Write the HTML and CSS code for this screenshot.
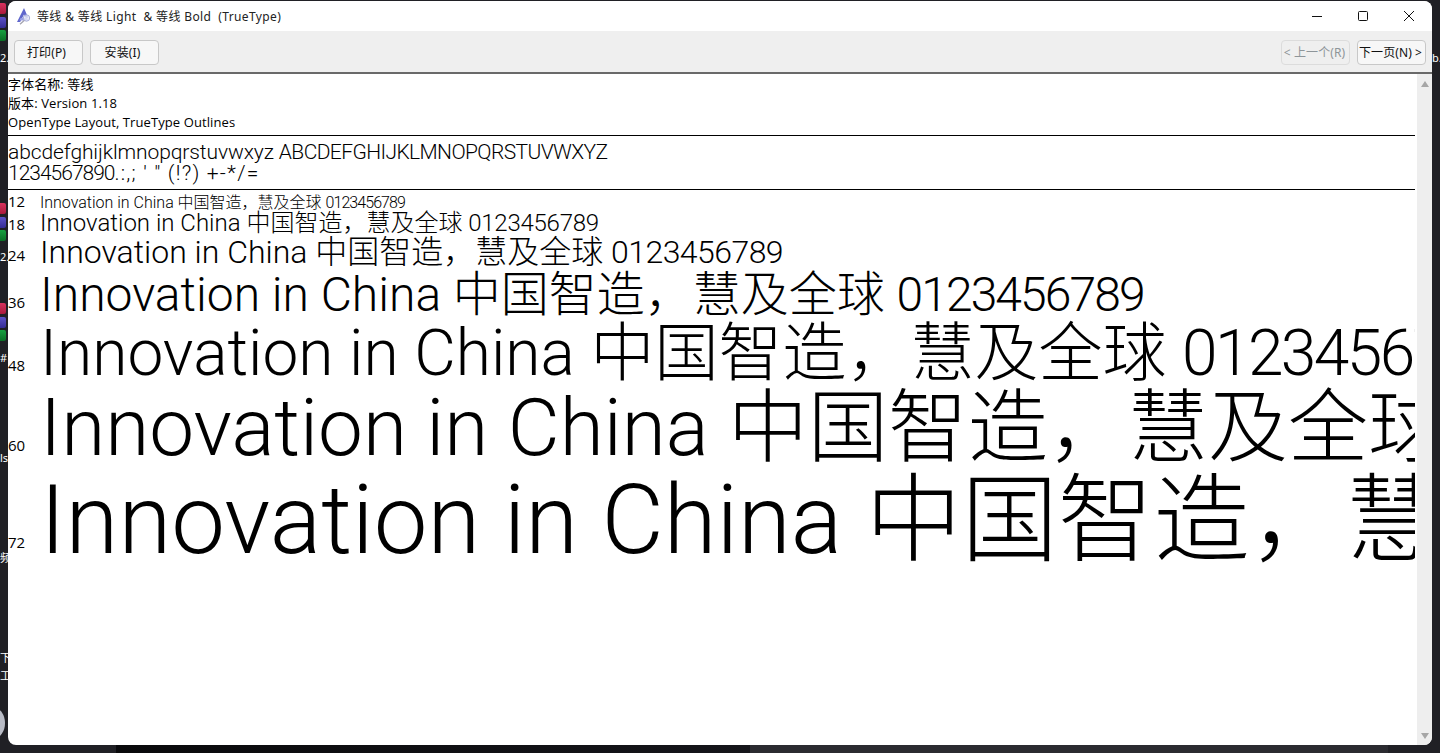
FILE: index.html
```html
<!DOCTYPE html>
<html lang="zh">
<head>
<meta charset="utf-8">
<title>等线</title>
<link rel="stylesheet" href="styles.css">
</head>
<body>
<div class="desk">
  <i class="tile t1"></i><i class="tile t2"></i><i class="tile t3"></i>
  <i class="tile t4"></i><i class="tile t5"></i><i class="tile t6"></i>
  <i class="tile t7"></i><i class="tile t8"></i><i class="tile t9"></i>
  <span class="bit b1">2.</span><span class="bit b2">2.</span><span class="bit b3">#</span><span class="bit b4">ls</span><span class="bit b5">频</span><span class="bit b6">下</span><span class="bit b7">工</span>
  <i class="disc"></i>
</div>
<span class="bit-right">b.</span>
<main class="window">
  <header class="titlebar">
    <svg class="app-icon" viewBox="0 0 18 18" width="18" height="18"><path d="M9 1 2 15h3.2L9 7.5l1.6 3.2h2.6z" fill="#5f66cc"/><path d="M5.6 11h6.4l1.2 2.4H4.4z" fill="#9aa0e6"/><circle cx="11.5" cy="11" r="3.2" fill="#e4e6f6" fill-opacity=".8" stroke="#a9aed8"/><path d="M9.2 13.4 5 17.2" stroke="#a4a4b0" stroke-width="1.3" fill="none"/></svg>
    <span class="title">等线 &amp; 等线 Light &nbsp;&amp; 等线 Bold &nbsp;(TrueType)</span>
    <div class="controls">
      <svg viewBox="0 0 46 30" width="46" height="30"><path d="M18 15.5h10" stroke="#111" fill="none"/></svg>
      <svg viewBox="0 0 46 30" width="46" height="30"><rect x="18.5" y="10.5" width="9" height="9" rx="1" stroke="#111" fill="none"/></svg>
      <svg viewBox="0 0 46 30" width="46" height="30"><path d="M18 10l10 10M28 10 18 20" stroke="#111" fill="none"/></svg>
    </div>
  </header>
  <nav class="toolbar">
    <button class="btn">打印(P)</button>
    <button class="btn">安装(I)</button>
    <span class="spacer"></span>
    <button class="btn nav off">&lt; 上一个(R)</button>
    <button class="btn nav">下一页(N) &gt;</button>
  </nav>
  <div class="body">
    <section class="content">
      <p class="meta">字体名称: 等线</p>
      <p class="meta">版本: Version 1.18</p>
      <p class="meta">OpenType Layout, TrueType Outlines</p>
      <div class="charset">
        <p>abcdefghijklmnopqrstuvwxyz <span class="caps">ABCDEFGHIJKLMNOPQRSTUVWXYZ</span></p>
        <p><span class="nums">1234567890</span><span class="punct">.:,; ' " (!?) +-*/=</span></p>
      </div>
      <div class="samples">
        <div class="row r12"><span class="num">12</span><span class="sample">Innovation in China 中国智造，慧及全球 <span class="digits">0123456789</span></span></div>
        <div class="row r18"><span class="num">18</span><span class="sample">Innovation in China 中国智造，慧及全球 <span class="digits">0123456789</span></span></div>
        <div class="row r24"><span class="num">24</span><span class="sample">Innovation in China 中国智造，慧及全球 <span class="digits">0123456789</span></span></div>
        <div class="row r36"><span class="num">36</span><span class="sample">Innovation in China 中国智造，慧及全球 <span class="digits">0123456789</span></span></div>
        <div class="row r48"><span class="num">48</span><span class="sample">Innovation in China 中国智造，慧及全球 <span class="digits">0123456789</span></span></div>
        <div class="row r60"><span class="num">60</span><span class="sample">Innovation in China 中国智造，慧及全球 <span class="digits">0123456789</span></span></div>
        <div class="row r72"><span class="num">72</span><span class="sample">Innovation in China 中国智造，慧及全球 <span class="digits">0123456789</span></span></div>
      </div>
    </section>
    <aside class="scrollbar">
      <i class="arrow up"></i>
      <i class="arrow down"></i>
    </aside>
  </div>
</main>
<footer class="taskbar">
  <i class="seg seg-a"></i><i class="seg seg-b"></i><i class="seg seg-c"></i><i class="seg seg-d"></i>
</footer>
</body>
</html>
```
FILE: styles.css
```css
* { box-sizing: border-box; }
html, body { margin: 0; height: 100%; overflow: hidden; }
body {
  background: #202025;
  padding: 1px 8px 0;
  font-family: "Open Sans", "Noto Sans CJK SC", sans-serif;
  color: #000;
  position: relative;
}
p { margin: 0; }
.window {
  height: 744px;
  background: #fff;
  border-radius: 8px;
  overflow: hidden;
  display: flex;
  flex-direction: column;
}
.taskbar { display: flex; height: 8px; margin: 0 -8px; }
.seg { display: block; height: 100%; }
.seg-a { width: 116px; background: #202025; }
.seg-b { width: 634px; background: linear-gradient(90deg, #09090b, #15151a); }
.seg-c { width: 638px; background: #2b2b30; }
.seg-d { flex: 1; background: #202025; }
.titlebar {
  height: 30px;
  flex: none;
  display: flex;
  align-items: center;
  padding-left: 7px;
  background: #fff;
}
.app-icon { flex: none; }
.title {
  margin-left: 4px;
  padding-top: 1px;
  font: 12px/16px "Noto Sans", "Noto Sans CJK SC", sans-serif;
  color: #222;
  letter-spacing: .37px;
}
.controls { margin-left: auto; display: flex; }
.toolbar {
  height: 43px;
  flex: none;
  display: flex;
  align-items: flex-start;
  gap: 7px;
  padding: 9px 6px 0 6px;
  background: #efefef;
  border-bottom: 2px solid #696969;
}
.spacer { flex: 1; }
.btn {
  width: 69px;
  height: 25px;
  padding: 0 4px 0 0;
  border: 1px solid #c8c8c8;
  border-radius: 4px;
  background: #f7f7f7;
  font: 12px/16px "Noto Sans", "Noto Sans CJK SC", sans-serif;
  letter-spacing: .1px;
  color: #111;
}
.nav { white-space: nowrap; padding: 0 2px 0 0; }
.off { color: #8e9599; border-color: #dcdcdc; background: #efefef; }
.body { flex: 1; display: flex; min-height: 0; }
.content { flex: 1; min-width: 0; overflow: hidden; margin-right: 2px; }
.scrollbar {
  width: 15px;
  flex: none;
  background: #eeeeee;
  display: flex;
  flex-direction: column;
  justify-content: space-between;
  align-items: center;
  padding: 7px 0 6px;
}
.arrow { width: 0; height: 0; border-left: 4px solid transparent; border-right: 4px solid transparent; }
.up { border-bottom: 6px solid #a6a6a6; }
.down { border-top: 6px solid #a6a6a6; }
.meta { font-size: 13px; line-height: 19px; white-space: nowrap; height: 19px; letter-spacing: .09px; }
.content > .meta:first-child { margin-top: 1px; }
.charset {
  margin-top: 3px;
  height: 55px;
  border-top: 1px solid #000;
  border-bottom: 1px solid #000;
  padding-top: 6px;
  font-family: Roboto, "Noto Sans CJK SC", sans-serif;
  font-size: 21px;
  line-height: 21px;
  font-weight: 300;
  letter-spacing: -.1px;
  white-space: nowrap;
}
.caps { letter-spacing: -.6px; }
.nums { letter-spacing: -1px; }
.punct { letter-spacing: 1.2px; }
.samples { white-space: nowrap; }
.row { display: flex; align-items: flex-start; }
.num { width: 32px; flex: none; margin-top: -1px; font-size: 15px; line-height: 18px; box-sizing: content-box; }
.sample { font-family: Roboto, "Noto Sans CJK SC", sans-serif; font-weight: 300; }
.digits { letter-spacing: -.04em; }
.r12 { height: 18px; line-height: 20px; margin-top: 3px; }
.r12 .sample { font-size: 16px; }
.r12 .digits { letter-spacing: -.94px; }
.r18 { height: 23px; line-height: 25px; }
.r18 .sample { font-size: 24px; }
.r18 .num { padding-top: 5px; }
.r18 .digits { letter-spacing: -.26px; }
.r24 { height: 34px; line-height: 36px; }
.r24 .sample { font-size: 32px; }
.r24 .num { padding-top: 13px; }
.r24 .digits { letter-spacing: -.55px; }
.r36 { height: 50px; line-height: 54px; }
.r36 .sample { font-size: 48px; }
.r36 .num { padding-top: 26px; }
.r48 { height: 65px; line-height: 71px; }
.r48 .sample { font-size: 64px; }
.r48 .num { padding-top: 39px; }
.r60 { height: 82px; line-height: 90px; }
.r60 .sample { font-size: 80px; }
.r60 .num { padding-top: 54px; }
.r72 { height: 102px; line-height: 110px; }
.r72 .sample { font-size: 96px; }
.r72 .num { padding-top: 69px; }
.desk { position: absolute; left: 0; top: 0; width: 8px; height: 100%; overflow: hidden; }
.tile { position: absolute; left: 0; width: 6px; height: 11px; border-radius: 0 2px 2px 0; }
.t1, .t4, .t7 { background: linear-gradient(#d8335f, #a81a3c); }
.t2, .t5, .t8 { background: linear-gradient(#5c52c8, #352c96); }
.t3, .t6, .t9 { background: linear-gradient(#17a040, #0a6e26); }
.t1 { top: 3px; } .t2 { top: 17px; } .t3 { top: 30px; }
.t4 { top: 203px; } .t5 { top: 217px; } .t6 { top: 230px; }
.t7 { top: 303px; } .t8 { top: 317px; } .t9 { top: 330px; }
.bit { position: absolute; left: 0; font: 11px/12px "Noto Sans", "Noto Sans CJK SC", sans-serif; color: #fff; }
.b1 { top: 52px; } .b2 { top: 251px; } .b3 { top: 352px; } .b4 { top: 452px; } .b5 { top: 552px; } .b6 { top: 652px; } .b7 { top: 670px; }
.disc { position: absolute; left: -16px; top: 708px; width: 21px; height: 30px; border-radius: 50%; background: #b9bcc6; }
.bit-right { position: absolute; left: 1432px; top: 52px; font: 11px/12px "Noto Sans", sans-serif; color: #fff; }
```
